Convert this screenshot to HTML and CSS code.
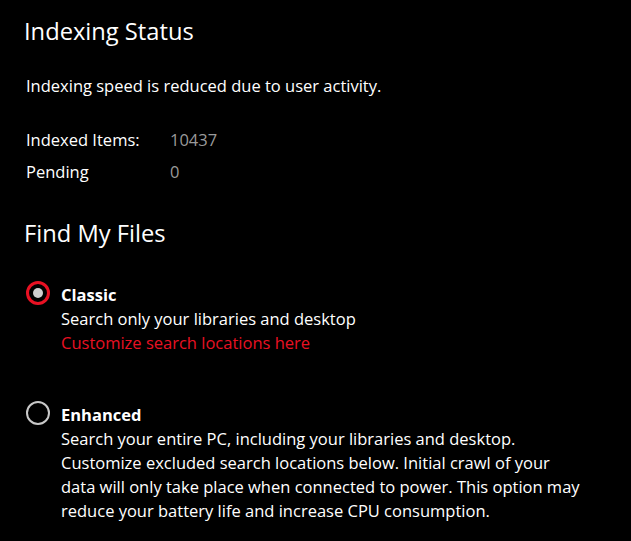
FILE: index.html
```html
<!DOCTYPE html>
<html>
<head>
<meta charset="utf-8">
<link rel="stylesheet" href="styles.css">
</head>
<body>
<div class="page">
  <h2 class="title">Indexing Status</h2>
  <p class="status">Indexing speed is reduced due to user activity.</p>
  <div class="stats">
    <div class="stat"><span class="label">Indexed Items:</span><span class="value">10437</span></div>
    <div class="stat"><span class="label">Pending</span><span class="value">0</span></div>
  </div>
  <h2 class="title title-find">Find My Files</h2>
  <div class="option option-classic">
    <span class="radio radio-on"><span class="dot"></span></span>
    <div class="option-body">
      <div class="option-name">Classic</div>
      <div class="option-desc">Search only your libraries and desktop</div>
      <a class="option-link" href="#">Customize search locations here</a>
    </div>
  </div>
  <div class="option option-enhanced">
    <span class="radio radio-off"></span>
    <div class="option-body">
      <div class="option-name">Enhanced</div>
      <div class="option-desc">Search your entire PC, including your libraries and desktop.<br>Customize excluded search locations below. Initial crawl of your<br>data will only take place when connected to power. This option may<br>reduce your battery life and increase CPU consumption.</div>
    </div>
  </div>
</div>
</body>
</html>
```
FILE: styles.css
```css
html, body {
  margin: 0;
  padding: 0;
  background: #000;
}
body {
  font-family: "Open Sans", "Noto Sans", sans-serif;
  color: #fff;
  font-size: 16.5px;
  line-height: 24px;
}
.page {
  padding: 15px 0 0 24px;
  display: flex;
  flex-direction: column;
  align-items: flex-start;
}
.title {
  margin: 0;
  font-size: 23.7px;
  font-weight: 400;
  line-height: 32px;
}
.status {
  margin: 27px 0 0 2px;
}
.stats {
  margin: 26px 0 0 2px;
}
.stat {
  display: flex;
  line-height: 32px;
}
.label {
  width: 144px;
}
.value {
  color: #9a9a9a;
}
.title-find {
  margin-top: 29px;
}
.option {
  display: flex;
  align-items: flex-start;
  margin-left: 2px;
}
.option-classic {
  margin-top: 32px;
}
.option-enhanced {
  margin-top: 46px;
}
.radio {
  box-sizing: border-box;
  width: 24px;
  height: 24px;
  border-radius: 50%;
  flex: none;
  display: flex;
  align-items: center;
  justify-content: center;
  margin-right: 11px;
}
.radio-on {
  border: 3px solid #e81123;
}
.dot {
  width: 10px;
  height: 10px;
  border-radius: 50%;
  background: #cfcfcf;
}
.radio-off {
  border: 2px solid #c8c8c8;
}
.option-body {
  padding-top: 2px;
}
.option-name {
  font-weight: 700;
}
.option-link {
  color: #e81123;
  text-decoration: none;
}
```
